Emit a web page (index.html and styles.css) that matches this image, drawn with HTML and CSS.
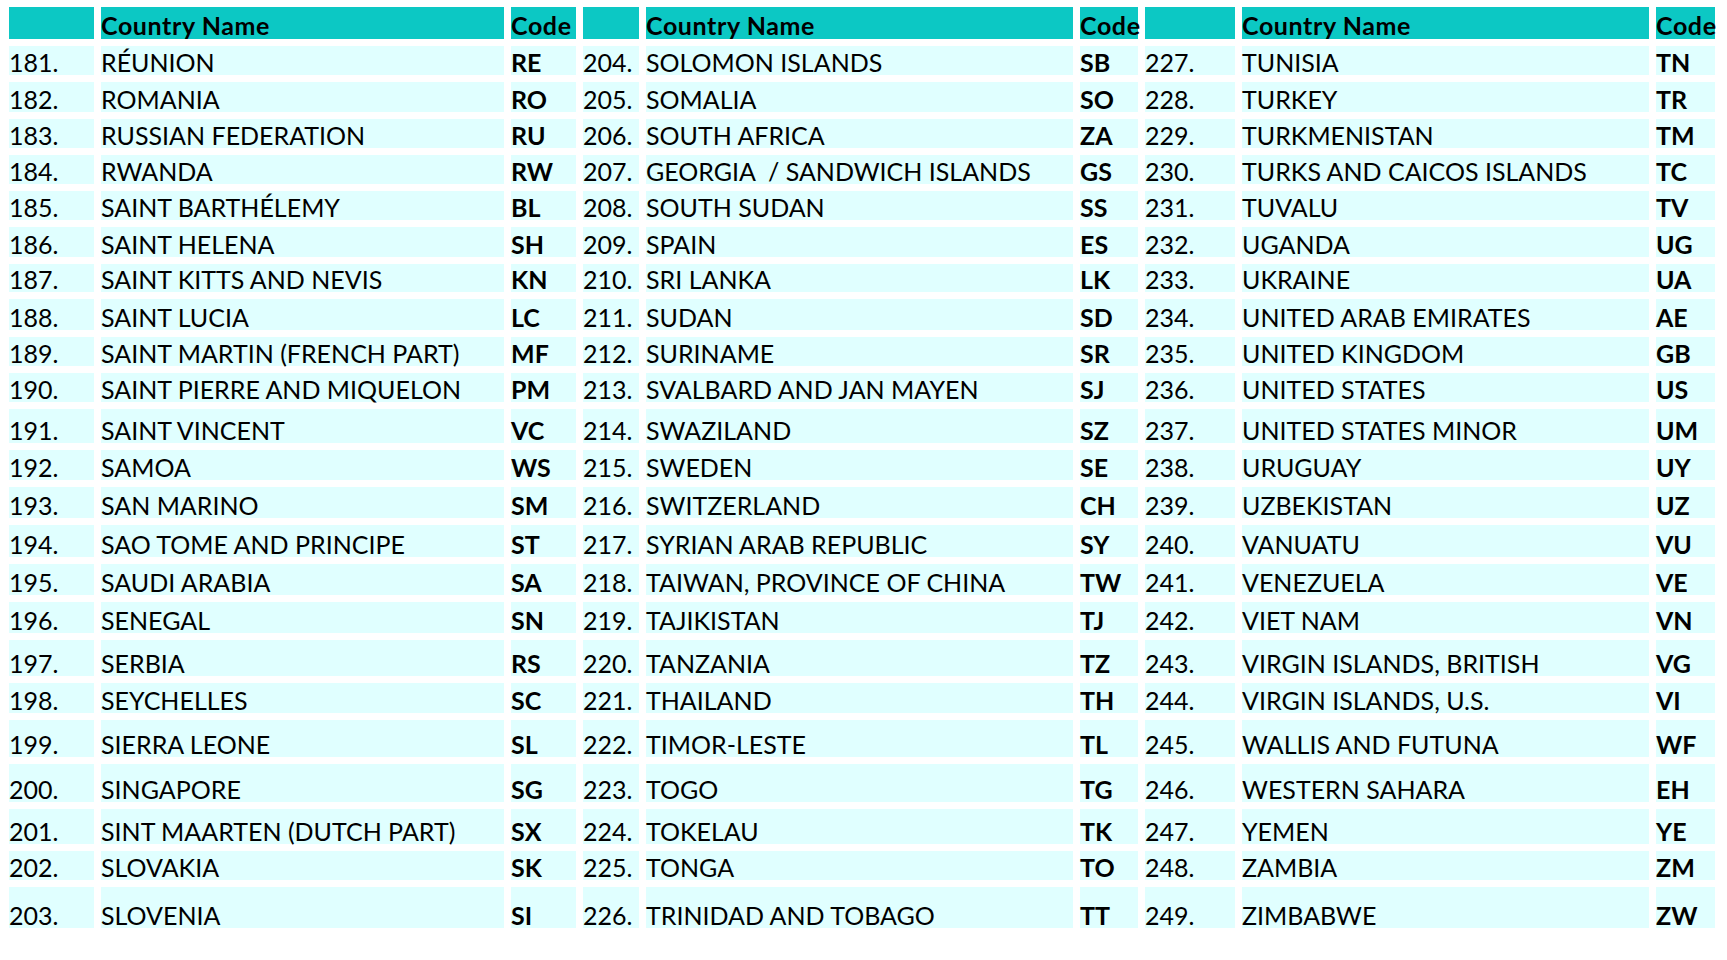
FILE: index.html
```html
<!DOCTYPE html>
<html lang="en">
<head>
<meta charset="utf-8">
<title>Country Codes</title>
<link rel="stylesheet" href="styles.css">
</head>
<body>
<table class="codes">
  <colgroup>
    <col class="c-num1"><col class="c-name1"><col class="c-code1">
    <col class="c-num2"><col class="c-name2"><col class="c-code2">
    <col class="c-num3"><col class="c-name3"><col class="c-code3">
  </colgroup>
  <thead>
    <tr class="head">
      <th></th><th>Country Name</th><th>Code</th>
      <th></th><th>Country Name</th><th>Code</th>
      <th></th><th>Country Name</th><th>Code</th>
    </tr>
  </thead>
  <tbody>
    <tr class="h29"><td>181.</td><td>RÉUNION</td><td class="code">RE</td><td>204.</td><td>SOLOMON ISLANDS</td><td class="code">SB</td><td>227.</td><td>TUNISIA</td><td class="code">TN</td></tr>
    <tr class="h30"><td>182.</td><td>ROMANIA</td><td class="code">RO</td><td>205.</td><td>SOMALIA</td><td class="code">SO</td><td>228.</td><td>TURKEY</td><td class="code">TR</td></tr>
    <tr class="h29"><td>183.</td><td>RUSSIAN FEDERATION</td><td class="code">RU</td><td>206.</td><td>SOUTH AFRICA</td><td class="code">ZA</td><td>229.</td><td>TURKMENISTAN</td><td class="code">TM</td></tr>
    <tr class="h29"><td>184.</td><td>RWANDA</td><td class="code">RW</td><td>207.</td><td>GEORGIA&nbsp; / SANDWICH ISLANDS</td><td class="code">GS</td><td>230.</td><td>TURKS AND CAICOS ISLANDS</td><td class="code">TC</td></tr>
    <tr class="h29"><td>185.</td><td>SAINT BARTHÉLEMY</td><td class="code">BL</td><td>208.</td><td>SOUTH SUDAN</td><td class="code">SS</td><td>231.</td><td>TUVALU</td><td class="code">TV</td></tr>
    <tr class="h30"><td>186.</td><td>SAINT HELENA</td><td class="code">SH</td><td>209.</td><td>SPAIN</td><td class="code">ES</td><td>232.</td><td>UGANDA</td><td class="code">UG</td></tr>
    <tr class="h28"><td>187.</td><td>SAINT KITTS AND NEVIS</td><td class="code">KN</td><td>210.</td><td>SRI LANKA</td><td class="code">LK</td><td>233.</td><td>UKRAINE</td><td class="code">UA</td></tr>
    <tr class="h31"><td>188.</td><td>SAINT LUCIA</td><td class="code">LC</td><td>211.</td><td>SUDAN</td><td class="code">SD</td><td>234.</td><td>UNITED ARAB EMIRATES</td><td class="code">AE</td></tr>
    <tr class="h29"><td>189.</td><td>SAINT MARTIN (FRENCH PART)</td><td class="code">MF</td><td>212.</td><td>SURINAME</td><td class="code">SR</td><td>235.</td><td>UNITED KINGDOM</td><td class="code">GB</td></tr>
    <tr class="h29"><td>190.</td><td>SAINT PIERRE AND MIQUELON</td><td class="code">PM</td><td>213.</td><td>SVALBARD AND JAN MAYEN</td><td class="code">SJ</td><td>236.</td><td>UNITED STATES</td><td class="code">US</td></tr>
    <tr class="h34"><td>191.</td><td>SAINT VINCENT</td><td class="code">VC</td><td>214.</td><td>SWAZILAND</td><td class="code">SZ</td><td>237.</td><td>UNITED STATES MINOR</td><td class="code">UM</td></tr>
    <tr class="h30"><td>192.</td><td>SAMOA</td><td class="code">WS</td><td>215.</td><td>SWEDEN</td><td class="code">SE</td><td>238.</td><td>URUGUAY</td><td class="code">UY</td></tr>
    <tr class="h31"><td>193.</td><td>SAN MARINO</td><td class="code">SM</td><td>216.</td><td>SWITZERLAND</td><td class="code">CH</td><td>239.</td><td>UZBEKISTAN</td><td class="code">UZ</td></tr>
    <tr class="h32"><td>194.</td><td>SAO TOME AND PRINCIPE</td><td class="code">ST</td><td>217.</td><td>SYRIAN ARAB REPUBLIC</td><td class="code">SY</td><td>240.</td><td>VANUATU</td><td class="code">VU</td></tr>
    <tr class="h31"><td>195.</td><td>SAUDI ARABIA</td><td class="code">SA</td><td>218.</td><td>TAIWAN, PROVINCE OF CHINA</td><td class="code">TW</td><td>241.</td><td>VENEZUELA</td><td class="code">VE</td></tr>
    <tr class="h31"><td>196.</td><td>SENEGAL</td><td class="code">SN</td><td>219.</td><td>TAJIKISTAN</td><td class="code">TJ</td><td>242.</td><td>VIET NAM</td><td class="code">VN</td></tr>
    <tr class="h36"><td>197.</td><td>SERBIA</td><td class="code">RS</td><td>220.</td><td>TANZANIA</td><td class="code">TZ</td><td>243.</td><td>VIRGIN ISLANDS, BRITISH</td><td class="code">VG</td></tr>
    <tr class="h30"><td>198.</td><td>SEYCHELLES</td><td class="code">SC</td><td>221.</td><td>THAILAND</td><td class="code">TH</td><td>244.</td><td>VIRGIN ISLANDS, U.S.</td><td class="code">VI</td></tr>
    <tr class="h37"><td>199.</td><td>SIERRA LEONE</td><td class="code">SL</td><td>222.</td><td>TIMOR-LESTE</td><td class="code">TL</td><td>245.</td><td>WALLIS AND FUTUNA</td><td class="code">WF</td></tr>
    <tr class="h38"><td>200.</td><td>SINGAPORE</td><td class="code">SG</td><td>223.</td><td>TOGO</td><td class="code">TG</td><td>246.</td><td>WESTERN SAHARA</td><td class="code">EH</td></tr>
    <tr class="h35"><td>201.</td><td>SINT MAARTEN (DUTCH PART)</td><td class="code">SX</td><td>224.</td><td>TOKELAU</td><td class="code">TK</td><td>247.</td><td>YEMEN</td><td class="code">YE</td></tr>
    <tr class="h29"><td>202.</td><td>SLOVAKIA</td><td class="code">SK</td><td>225.</td><td>TONGA</td><td class="code">TO</td><td>248.</td><td>ZAMBIA</td><td class="code">ZM</td></tr>
    <tr class="h41"><td>203.</td><td>SLOVENIA</td><td class="code">SI</td><td>226.</td><td>TRINIDAD AND TOBAGO</td><td class="code">TT</td><td>249.</td><td>ZIMBABWE</td><td class="code">ZW</td></tr>
  </tbody>
</table>
</body>
</html>
```

FILE: styles.css
```css
html, body {
  margin: 0;
  padding: 0;
  background: #ffffff;
}

body {
  font-family: "Lato", "Liberation Sans", sans-serif;
  color: #000000;
}

.codes {
  table-layout: fixed;
  border-collapse: separate;
  border-spacing: 7px;
  margin: 0 0 0 2px;
  width: 1720px;
}

.c-num1 { width: 85px; }
.c-name1 { width: 403px; }
.c-code1 { width: 65px; }
.c-num2 { width: 56px; }
.c-name2 { width: 427px; }
.c-code2 { width: 58px; }
.c-num3 { width: 90px; }
.c-name3 { width: 407px; }
.c-code3 { width: 59px; }

.codes th,
.codes td {
  padding: 0;
  text-align: left;
  vertical-align: bottom;
  white-space: nowrap;
  overflow: visible;
  font-size: 25px;
  line-height: 1;
}

.codes th {
  background: #0cc8c4;
  font-weight: 700;
  letter-spacing: 0.6px;
  height: 32px;
  padding-bottom: 1px;
  box-sizing: border-box;
}

.codes td {
  background: #e0ffff;
  font-weight: 400;
}

.codes td.code {
  font-weight: 700;
}

.h28 td { height: 28px; }
.h29 td { height: 29px; }
.h30 td { height: 30px; }
.h31 td { height: 31px; }
.h32 td { height: 32px; }
.h34 td { height: 34px; }
.h35 td { height: 35px; }
.h36 td { height: 36px; }
.h37 td { height: 37px; }
.h38 td { height: 38px; }
.h41 td { height: 41px; }
```
